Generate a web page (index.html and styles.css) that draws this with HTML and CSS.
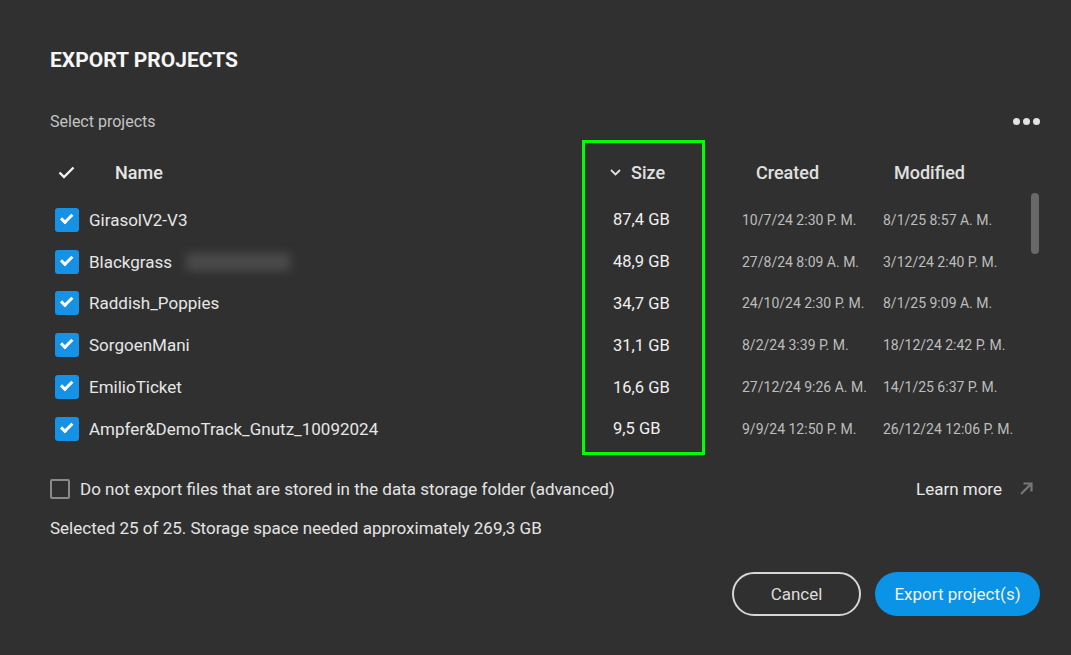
FILE: index.html
```html
<!DOCTYPE html>
<html>
<head>
  <title>Export projects</title>
  <meta charset="UTF-8">
  <meta name="viewport" content="width=device-width,initial-scale=1">
  <link rel="stylesheet" href="styles.css">
</head>

<body>
  <div class="dialog">
    <h1 class="title">Export projects</h1>

    <div class="subhead">
      <span>Select projects</span>
      <span class="more"><i></i><i></i><i></i></span>
    </div>

    <div class="table">
      <div class="row head">
        <div class="c-check">
          <svg width="17" height="13" viewBox="0 0 17 13"><path d="M1.5 6.5 L6 11 L15.5 1.5" fill="none" stroke="#f0f0f0" stroke-width="2.4"/></svg>
        </div>
        <div class="c-name">Name</div>
        <div class="c-size">
          <svg width="11" height="7" viewBox="0 0 11 7"><path d="M1 1 L5.5 5.5 L10 1" fill="none" stroke="#e0e0e0" stroke-width="1.8"/></svg>
          Size
        </div>
        <div class="c-created">Created</div>
        <div class="c-modified">Modified</div>
      </div>

      <div class="row">
        <div class="c-check"><span class="box on"></span></div>
        <div class="c-name">GirasolV2-V3</div>
        <div class="c-size">87,4 GB</div>
        <div class="c-created">10/7/24 2:30 P. M.</div>
        <div class="c-modified">8/1/25 8:57 A. M.</div>
      </div>
      <div class="row">
        <div class="c-check"><span class="box on"></span></div>
        <div class="c-name">Blackgrass <span class="blurred"></span></div>
        <div class="c-size">48,9 GB</div>
        <div class="c-created">27/8/24 8:09 A. M.</div>
        <div class="c-modified">3/12/24 2:40 P. M.</div>
      </div>
      <div class="row">
        <div class="c-check"><span class="box on"></span></div>
        <div class="c-name">Raddish_Poppies</div>
        <div class="c-size">34,7 GB</div>
        <div class="c-created">24/10/24 2:30 P. M.</div>
        <div class="c-modified">8/1/25 9:09 A. M.</div>
      </div>
      <div class="row">
        <div class="c-check"><span class="box on"></span></div>
        <div class="c-name">SorgoenMani</div>
        <div class="c-size">31,1 GB</div>
        <div class="c-created">8/2/24 3:39 P. M.</div>
        <div class="c-modified">18/12/24 2:42 P. M.</div>
      </div>
      <div class="row">
        <div class="c-check"><span class="box on"></span></div>
        <div class="c-name">EmilioTicket</div>
        <div class="c-size">16,6 GB</div>
        <div class="c-created">27/12/24 9:26 A. M.</div>
        <div class="c-modified">14/1/25 6:37 P. M.</div>
      </div>
      <div class="row">
        <div class="c-check"><span class="box on"></span></div>
        <div class="c-name">Ampfer&amp;DemoTrack_Gnutz_10092024</div>
        <div class="c-size">9,5 GB</div>
        <div class="c-created">9/9/24 12:50 P. M.</div>
        <div class="c-modified">26/12/24 12:06 P. M.</div>
      </div>

      <!-- highlight round the size column -->
      <div class="highlight"></div>
      <div class="scrollbar"></div>
    </div>

    <div class="option">
      <label class="opt-label"><span class="box"></span>Do not export files that are stored in the data storage folder (advanced)</label>
      <a href="#" class="learn">Learn more
        <svg width="15" height="15" viewBox="0 0 15 15"><path d="M2 13 L12.5 2.5 M4.5 2.5 H12.5 V10.5" fill="none" stroke="#777" stroke-width="2.2"/></svg>
      </a>
    </div>

    <p class="summary">Selected 25 of 25. Storage space needed approximately 269,3 GB</p>

    <div class="actions">
      <button class="btn cancel">Cancel</button>
      <button class="btn export">Export project(s)</button>
    </div>
  </div>
</body>
</html>
```

FILE: styles.css
```css
*, *:before, *:after {
  box-sizing: border-box;
}

html, body {
  width: 100%;
  height: 100%;
  margin: 0;
}

body {
  background: #303030;
  color: #e8e8e8;
  font-family: Roboto, "Liberation Sans", sans-serif;
  overflow: hidden;
}

.dialog {
  padding: 48px 31px 0 50px;
}

.title {
  margin: 0;
  font-size: 21px;
  line-height: 24px;
  font-weight: 700;
  text-transform: uppercase;
  color: #f6f6f6;
}

.subhead {
  display: flex;
  justify-content: space-between;
  align-items: center;
  margin-top: 39px;
  height: 20px;
  font-size: 16px;
  color: #c4c4c4;
}

.more {
  display: flex;
  gap: 3px;
}
.more i {
  width: 7px;
  height: 7px;
  border-radius: 50%;
  background: #e2e2e2;
}

.table {
  position: relative;
  margin-top: 16px;
}

.row {
  display: flex;
  align-items: center;
  height: 41.8px;
  font-size: 17px;
}

.row.head {
  height: 52px;
  padding-bottom: 2px;
  font-size: 18px;
  font-weight: 500;
  color: #e0e0e0;
}

.c-check {
  width: 39px;
  display: flex;
  align-items: center;
}
.head .c-check {
  padding-left: 8px;
}

.c-name {
  width: 493px;
  display: flex;
  align-items: center;
  color: #e6e6e6;
}
.head .c-name {
  padding-left: 26px;
}

.c-size {
  width: 123px;
  padding-left: 31px;
  font-size: 16.5px;
  color: #f0f0f0;
}
.head .c-size {
  padding-left: 28px;
  display: flex;
  align-items: center;
  gap: 10px;
  font-size: 18px;
  color: #e0e0e0;
}

.c-created {
  width: 178px;
  padding-left: 37px;
  font-size: 14px;
  color: #bdbdbd;
}
.head .c-created {
  padding-left: 51px;
  font-size: 18px;
  color: #e0e0e0;
}

.c-modified {
  font-size: 14px;
  color: #bdbdbd;
}
.head .c-modified {
  padding-left: 11px;
  font-size: 18px;
  color: #e0e0e0;
}

.box {
  display: inline-block;
  width: 20px;
  height: 20px;
  border: 2px solid #8a8a8a;
  border-radius: 2px;
}

.box.on {
  position: relative;
  width: 24px;
  height: 24px;
  margin-left: 5px;
  border: none;
  border-radius: 3px;
  background: #1592e6;
}
.box.on::after {
  content: "";
  position: absolute;
  left: 5px;
  top: 4px;
  width: 12px;
  height: 7px;
  border-left: 3px solid #fff;
  border-bottom: 3px solid #fff;
  transform: rotate(-45deg) translate(-1px, 2px);
}

.blurred {
  display: inline-block;
  width: 104px;
  height: 18px;
  margin-left: 14px;
  background: #4a4a4a;
  filter: blur(5px);
}

.highlight {
  position: absolute;
  left: 532px;
  top: -7px;
  width: 123px;
  height: 315px;
  border: 3px solid #00ff00;
}

.scrollbar {
  position: absolute;
  left: 981px;
  top: 46px;
  width: 8px;
  height: 61px;
  border-radius: 4px;
  background: #686868;
}

.option {
  display: flex;
  justify-content: space-between;
  align-items: center;
  margin-top: 27px;
  height: 24px;
  font-size: 17px;
}

.opt-label {
  display: flex;
  align-items: center;
  gap: 10px;
  color: #e4e4e4;
}

.learn {
  display: flex;
  align-items: center;
  gap: 17px;
  padding-right: 6px;
  color: #e8e8e8;
  text-decoration: none;
}

.summary {
  margin: 15px 0 0;
  line-height: 24px;
  font-size: 17px;
  color: #e4e4e4;
}

.actions {
  display: flex;
  justify-content: flex-end;
  gap: 14px;
  margin-top: 32px;
}

.btn {
  height: 44px;
  border-radius: 22px;
  font-family: inherit;
  font-size: 17px;
  cursor: pointer;
}

.cancel {
  width: 129px;
  background: transparent;
  border: 2.5px solid #d6d6d6;
  color: #dcdcdc;
}

.export {
  width: 165px;
  background: #0a93e7;
  border: none;
  color: #f2f2f2;
}
```
